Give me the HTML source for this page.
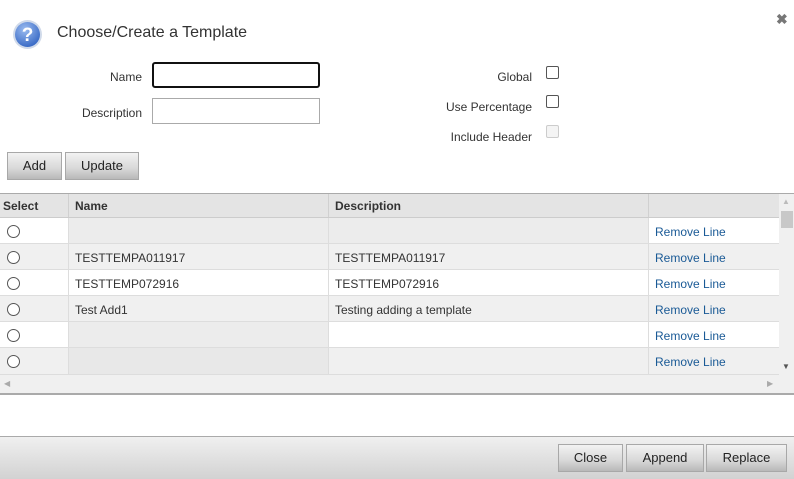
<!DOCTYPE html>
<html><head><style>
*{box-sizing:border-box;margin:0;padding:0}
body{width:794px;height:479px;background:#fff;font-family:"Liberation Sans",sans-serif;font-size:12px;color:#333;position:relative;overflow:hidden}
.a{position:absolute}
.lbl{position:absolute;text-align:right;color:#333;font-size:12px}
.btn{position:absolute;height:28px;border:1px solid #a8a8a8;background:linear-gradient(#f2f2f2,#d8d8d8 60%,#b8b8b8);font-size:13px;color:#222;text-align:center;line-height:26px}
.cb{position:absolute;width:13px;height:13px;border:1px solid #555;border-radius:2px;background:#fff}
.row{position:absolute;left:0;width:779px;height:26px;border-bottom:1px solid #ddd}
.c{position:absolute;top:0;height:25px;line-height:28px;padding-left:6px;border-right:1px solid #ddd}
.rad{position:absolute;left:7px;top:7px;width:13px;height:13px;border:1px solid #555;border-radius:50%;background:#fff;z-index:1}
.rl{color:#1a5a96}
</style></head><body>
<svg class="a" style="left:12px;top:19px" width="31" height="31" viewBox="0 0 31 31">
<defs><radialGradient id="g" cx="40%" cy="30%" r="70%"><stop offset="0" stop-color="#9bbcf0"/><stop offset="1" stop-color="#3a6bc6"/></radialGradient></defs>
<circle cx="15.5" cy="15.5" r="14.5" fill="#d0daea"/>
<circle cx="15.5" cy="15.5" r="12.5" fill="url(#g)"/>
<text x="15.5" y="22" text-anchor="middle" font-family="Liberation Sans" font-weight="bold" font-size="19" fill="#fff">?</text>
</svg>
<div class="a" style="left:57px;top:24px;font-size:16px;color:#333">Choose/Create a Template</div>
<div class="a" style="left:776px;top:11px;font-size:14px;color:#777;font-weight:bold">✖</div>

<div class="lbl" style="left:60px;width:82px;top:70px">Name</div>
<div class="a" style="left:152px;top:62px;width:168px;height:26px;border:2px solid #111;border-radius:3px"></div>
<div class="lbl" style="left:60px;width:82px;top:106px">Description</div>
<div class="a" style="left:152px;top:98px;width:168px;height:26px;border:1px solid #aaa"></div>

<div class="lbl" style="left:400px;width:132px;top:70px">Global</div>
<div class="cb" style="left:546px;top:66px"></div>
<div class="lbl" style="left:400px;width:132px;top:100px">Use Percentage</div>
<div class="cb" style="left:546px;top:95px"></div>
<div class="lbl" style="left:400px;width:132px;top:130px">Include Header</div>
<div class="cb" style="left:546px;top:125px;border-color:#ccc;background:#f4f4f4"></div>

<div class="btn" style="left:7px;top:152px;width:55px">Add</div>
<div class="btn" style="left:65px;top:152px;width:74px">Update</div>

<div class="a" style="left:0;top:193px;width:794px;height:202px;border-top:1px solid #aaa;border-bottom:2px solid #aaa;background:#f0f0f0"></div>
<div class="row" style="top:194px;height:24px;background:#e4e4e4;font-weight:bold;border-bottom:1px solid #ccc">
<div class="c" style="left:0;width:69px;padding-left:3px;line-height:24px;height:23px;border-color:#d0d0d0">Select</div>
<div class="c" style="left:69px;width:260px;line-height:24px;height:23px;border-color:#d0d0d0">Name</div>
<div class="c" style="left:329px;width:320px;line-height:24px;height:23px;border-color:#d0d0d0">Description</div>
</div>

<div class="row" style="top:218px;background:#fff"><div class="rad"></div>
<div class="c" style="left:0;width:69px"></div>
<div class="c" style="left:69px;width:260px;background:#ececec"></div>
<div class="c" style="left:329px;width:320px;background:#ececec"></div>
<div class="c rl" style="left:649px;width:130px;border:none">Remove Line</div></div>

<div class="row" style="top:244px;background:#f0f0f0"><div class="rad"></div>
<div class="c" style="left:0;width:69px"></div>
<div class="c" style="left:69px;width:260px">TESTTEMPA011917</div>
<div class="c" style="left:329px;width:320px">TESTTEMPA011917</div>
<div class="c rl" style="left:649px;width:130px;border:none">Remove Line</div></div>

<div class="row" style="top:270px;background:#fff"><div class="rad"></div>
<div class="c" style="left:0;width:69px"></div>
<div class="c" style="left:69px;width:260px">TESTTEMP072916</div>
<div class="c" style="left:329px;width:320px">TESTTEMP072916</div>
<div class="c rl" style="left:649px;width:130px;border:none">Remove Line</div></div>

<div class="row" style="top:296px;background:#f0f0f0"><div class="rad"></div>
<div class="c" style="left:0;width:69px"></div>
<div class="c" style="left:69px;width:260px">Test Add1</div>
<div class="c" style="left:329px;width:320px">Testing adding a template</div>
<div class="c rl" style="left:649px;width:130px;border:none">Remove Line</div></div>

<div class="row" style="top:322px;background:#fff"><div class="rad"></div>
<div class="c" style="left:0;width:69px"></div>
<div class="c" style="left:69px;width:260px;background:#ececec"></div>
<div class="c" style="left:329px;width:320px"></div>
<div class="c rl" style="left:649px;width:130px;border:none">Remove Line</div></div>

<div class="row" style="top:348px;height:27px;background:#f0f0f0"><div class="rad"></div>
<div class="c" style="left:0;width:69px;height:26px"></div>
<div class="c" style="left:69px;width:260px;height:26px;background:#e8e8e8"></div>
<div class="c" style="left:329px;width:320px;height:26px"></div>
<div class="c rl" style="left:649px;width:130px;border:none">Remove Line</div></div>

<div class="a" style="left:0;top:375px;width:779px;height:18px;background:#f0f0f0"></div>
<div class="a" style="left:4px;top:379px;font-size:8px;color:#aaa">◀</div>
<div class="a" style="left:767px;top:379px;font-size:8px;color:#aaa">▶</div>
<div class="a" style="left:779px;top:194px;width:15px;height:199px;background:#f0f0f0"></div>
<div class="a" style="left:781px;top:211px;width:12px;height:17px;background:#c8c8c8"></div>
<div class="a" style="left:782px;top:197px;font-size:8px;color:#bbb">▲</div>
<div class="a" style="left:782px;top:362px;font-size:8px;color:#555">▼</div>

<div class="a" style="left:0;top:436px;width:794px;height:43px;border-top:1px solid #aaa;background:linear-gradient(#f0f0f0,#d2d2d2)"></div>
<div class="btn" style="left:558px;top:444px;width:65px">Close</div>
<div class="btn" style="left:626px;top:444px;width:78px">Append</div>
<div class="btn" style="left:706px;top:444px;width:81px">Replace</div>
</body></html>
